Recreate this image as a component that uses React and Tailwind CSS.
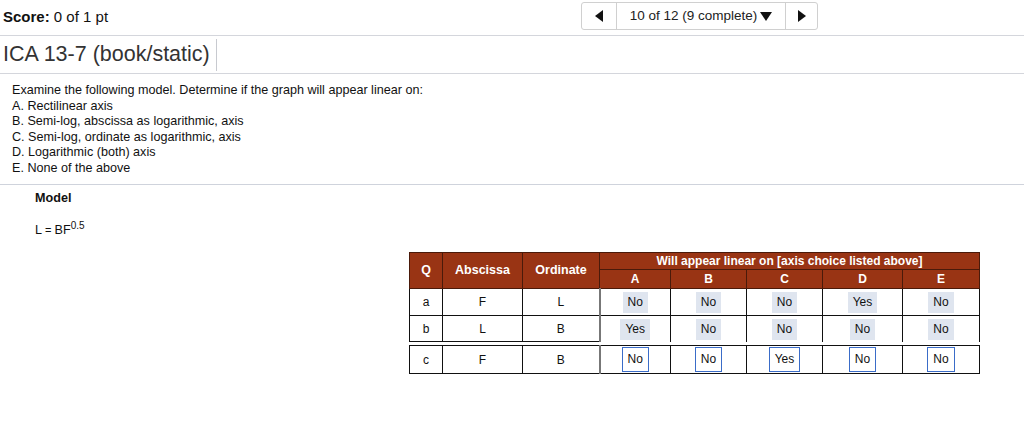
import React from "react";

const rows = [
  { q: "a", x: "F", y: "L", ans: ["No", "No", "No", "Yes", "No"] },
  { q: "b", x: "L", y: "B", ans: ["Yes", "No", "No", "No", "No"] },
];

const last = { q: "c", x: "F", y: "B", ans: ["No", "No", "Yes", "No", "No"] };

function Cols() {
  return (
    <colgroup>
      <col className="w-[33px]" />
      <col className="w-[80px]" />
      <col className="w-[77px]" />
      <col className="w-[71px]" />
      <col className="w-[76px]" />
      <col className="w-[76px]" />
      <col className="w-[80px]" />
      <col className="w-[77px]" />
    </colgroup>
  );
}

export default function App() {
  return (
    <div className="w-[1024px] h-[442px] bg-white text-[#111] overflow-hidden" style={{ fontFamily: '"Liberation Sans", Arial, sans-serif' }}>

      {/* Top bar */}
      <div className="flex items-center h-[36px] border-b border-[#d4d6dc]">
        <div className="pl-[3px] text-[15px]">
          <span className="font-bold">Score:</span> 0 of 1 pt
        </div>
        <div className="ml-auto mr-[206px] flex h-[28px] mb-[3px] border border-[#d0d0d0] rounded-[3px] text-[13.5px] text-[#222]">
          <button className="w-[35px] flex items-center justify-center border-r border-[#d0d0d0]">
            <svg width="9" height="12" viewBox="0 0 9 12"><path d="M8 0 L0 6 L8 12 Z" fill="#111" /></svg>
          </button>
          <div className="w-[168px] flex items-center justify-center gap-[3px]">
            10 of 12 (9 complete)
            <svg width="12" height="9" viewBox="0 0 12 9"><path d="M0 0 L12 0 L6 9 Z" fill="#111" /></svg>
          </div>
          <button className="w-[32px] flex items-center justify-center border-l border-[#d0d0d0]">
            <svg width="9" height="12" viewBox="0 0 9 12"><path d="M1 0 L9 6 L1 12 Z" fill="#111" /></svg>
          </button>
        </div>
      </div>

      {/* Title */}
      <div className="flex h-[38px] border-b border-[#d4d6dc] items-center">
        <div className="pl-[3px] pr-[6px] text-[21.5px] text-[#333] h-[32px] flex items-center border-r border-[#c8cad0]">
          ICA 13-7 (book/static)
        </div>
      </div>

      {/* Question */}
      <div className="pl-[12px] pt-[9px] pb-[7px] text-[12.6px] leading-[15.6px] border-b border-[#cfd3dc]">
        <div>Examine the following model. Determine if the graph will appear linear on:</div>
        <div>A. Rectilinear axis</div>
        <div>B. Semi-log, abscissa as logarithmic, axis</div>
        <div>C. Semi-log, ordinate as logarithmic, axis</div>
        <div>D. Logarithmic (both) axis</div>
        <div>E. None of the above</div>
      </div>

      <div className="pl-[35px] pt-[4px] text-[12.6px]">
        <div className="font-bold">Model</div>
        <div className="mt-[14px]">
          L<span className="text-[11px]"> = </span>BF<sup className="text-[10px]">0.5</sup>
        </div>
      </div>

      {/* Table */}
      <div className="ml-[409px] mt-[12px] text-[12px]">
        <table className="table-fixed border-collapse w-[570px]">
          <Cols />
          <thead className="bg-[#993414] text-white font-bold">
            <tr className="h-[17px]">
              <th rowSpan={2} className="border border-[#4a1a0a] font-bold text-[12.5px]">Q</th>
              <th rowSpan={2} className="border border-[#4a1a0a] font-bold text-[12.5px]">Abscissa</th>
              <th rowSpan={2} className="border border-[#4a1a0a] font-bold text-[12.5px]">Ordinate</th>
              <th colSpan={5} className="border border-[#4a1a0a] font-bold leading-[15px]">
                Will appear linear on [axis choice listed above]
              </th>
            </tr>
            <tr className="h-[19px]">
              {["A", "B", "C", "D", "E"].map((h) => (
                <th key={h} className="border border-[#4a1a0a] font-bold leading-[15px]">{h}</th>
              ))}
            </tr>
          </thead>
          <tbody>
            {rows.map((r, i) => (
              <tr key={r.q} className={i === 0 ? "h-[27px]" : "h-[26px]"}>
                <td className="border-x border-[#111] border-b text-center">{r.q}</td>
                <td className="border-x border-[#111] border-b text-center">{r.x}</td>
                <td className="border-l border-r-2 border-[#111] border-r-[#777] border-b text-center">{r.y}</td>
                {r.ans.map((a, j) => (
                  <td key={j} className={`border-x border-[#111] text-center ${i === 0 ? "border-b" : ""}`}>
                    <span className="inline-block bg-[#dfe5ef] px-[5px] py-[3px] leading-[15px]">{a}</span>
                  </td>
                ))}
              </tr>
            ))}
          </tbody>
        </table>

        <table className="table-fixed border-collapse w-[570px] mt-[3px]">
          <Cols />
          <tbody>
            <tr className="h-[28px]">
              <td className="border border-[#111] text-center">{last.q}</td>
              <td className="border border-[#111] text-center">{last.x}</td>
              <td className="border border-[#111] border-r-2 border-r-[#777] text-center">{last.y}</td>
              {last.ans.map((a, j) => (
                <td key={j} className="border border-[#111] text-center">
                  <span className="inline-block border border-[#3a6cc8] bg-white px-[5px] py-[4px] leading-[15px]">{a}</span>
                </td>
              ))}
            </tr>
          </tbody>
        </table>
      </div>
    </div>
  );
}
